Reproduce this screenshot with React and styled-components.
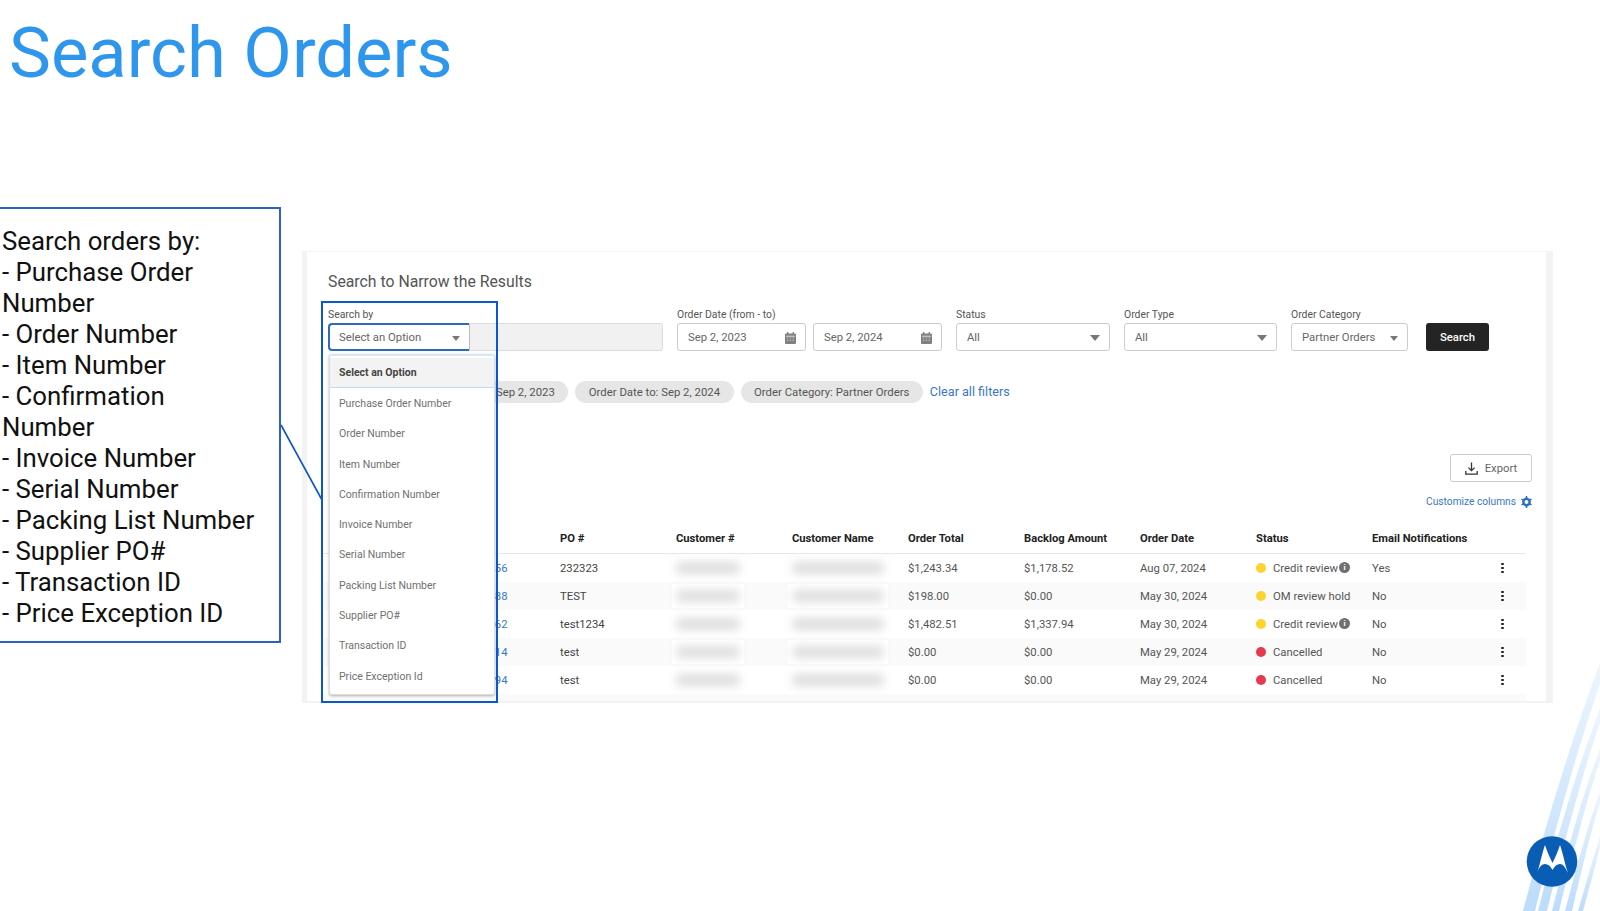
import React from 'react';
import styled, { createGlobalStyle } from 'styled-components';

const GlobalStyle = createGlobalStyle`
  html, body {
    margin: 0;
    padding: 0;
    background: #fff;
    font-family: Roboto, "Liberation Sans", sans-serif;
  }
`;

const Slide = styled.div`
  position: relative;
  width: 1600px;
  height: 911px;
  overflow: hidden;
  background: #fff;
`;

const Title = styled.h1`
  margin: 0;
  padding: 8px 0 0 9px;
  height: 100px;
  box-sizing: border-box;
  font-size: 70.6px;
  line-height: 90px;
  font-weight: 400;
  color: #2f96ee;
`;

const Content = styled.div`
  display: flex;
  align-items: flex-start;
  margin-top: 107px;
  margin-left: -2px;
`;

const Callout = styled.div`
  width: 283px;
  height: 436px;
  box-sizing: border-box;
  border: 2px solid #2a62c8;
  padding: 17px 0 0 2px;
  margin-right: 21px;
  font-size: 25.8px;
  line-height: 31px;
  color: #111;
  flex: none;
`;

const CalloutLine = styled.div``;

const Panel = styled.div`
  position: relative;
  margin-top: 44px;
  width: 1251px;
  height: 452px;
  box-sizing: border-box;
  background: #fff;
  border: solid #f3f3f3;
  border-width: 1px 7px 2px 5px;
  padding: 21px 0 0 21px;
  overflow: hidden;
  flex: none;
`;

const Heading = styled.div`
  font-size: 15.8px;
  line-height: 18px;
  color: #555;
`;

const FilterRow = styled.div`
  display: flex;
  align-items: flex-end;
  margin-top: 18px;
`;

const Field = styled.div`
  display: flex;
  flex-direction: column;
  flex: none;
  margin-left: ${(p) => p.$gap || 0}px;
`;

const Label = styled.div`
  font-size: 10.4px;
  line-height: 12px;
  margin-bottom: 2px;
  color: #555;
`;

const Pair = styled.div`
  display: flex;
  gap: 7px;
`;

const Control = styled.div`
  width: ${(p) => p.$width}px;
  height: 28px;
  box-sizing: border-box;
  display: flex;
  align-items: center;
  justify-content: space-between;
  padding: 0 9px 0 10px;
  font-size: 11.3px;
  color: #666;
  background: #fff;
  border: 1px solid #ccc;
  border-radius: 3px;
`;

const FocusSelect = styled(Control)`
  border: solid #2a6cb8;
  border-width: 2px 0 2px 2px;
  border-radius: 4px 0 0 4px;
  padding: 0 9px 0 9px;
`;

const GreyInput = styled.div`
  width: 194px;
  height: 28px;
  box-sizing: border-box;
  background: #f1f1f1;
  border: 1px solid #ddd;
  border-left-color: #bbb;
  border-radius: 0 3px 3px 0;
`;

const SearchGroup = styled.div`
  display: flex;
`;

const Caret = styled.span`
  width: 0;
  height: 0;
  margin-top: 2px;
  border-left: ${(p) => p.$size || 5}px solid transparent;
  border-right: ${(p) => p.$size || 5}px solid transparent;
  border-top: ${(p) => (p.$size || 5) + 1}px solid #777;
`;

const SearchButton = styled.button`
  width: 63px;
  height: 28px;
  margin-left: 18px;
  flex: none;
  background: #242424;
  color: #fff;
  border: 0;
  border-radius: 3px;
  font-family: inherit;
  font-size: 11.3px;
  font-weight: 500;
`;

const ChipRow = styled.div`
  display: flex;
  align-items: center;
  gap: 7px;
  margin-top: 29.5px;
  margin-left: 68px;
`;

const Chip = styled.span`
  height: 22px;
  padding: 0 13.5px;
  display: flex;
  align-items: center;
  background: #e6e6e6;
  border-radius: 11px;
  font-size: 11.35px;
  color: #555;
  white-space: nowrap;
`;

const ClearLink = styled.a`
  font-size: 12.6px;
  color: #3b78c4;
`;

const ActionColumn = styled.div`
  display: flex;
  flex-direction: column;
  align-items: flex-end;
  gap: 13px;
  margin-top: 51.5px;
  margin-right: 14px;
`;

const ExportButton = styled.div`
  width: 82px;
  height: 28px;
  box-sizing: border-box;
  display: flex;
  align-items: center;
  justify-content: center;
  gap: 7px;
  border: 1px solid #ccc;
  border-radius: 3px;
  font-size: 11.3px;
  color: #666;
`;

const CustomizeLink = styled.div`
  display: flex;
  align-items: center;
  gap: 5px;
  font-size: 10.2px;
  line-height: 14px;
  color: #3b78c4;
`;

const Table = styled.div`
  margin-top: 15px;
  margin-left: -5px;
  width: 1203px;
`;

const HeaderRow = styled.div`
  display: grid;
  grid-template-columns: 121px repeat(9, 116px) 1fr;
  height: 29px;
  align-items: center;
  border-bottom: 1px solid #e8e8e8;
  font-size: 11.2px;
  font-weight: 700;
  color: #222;
`;

const Row = styled.div`
  display: grid;
  grid-template-columns: 121px repeat(8, 116px) 1fr;
  height: 28px;
  align-items: center;
  font-size: 11.3px;
  color: #555;
  background: ${(p) => (p.$alt ? '#fafafa' : '#fff')};
`;

const OrderLink = styled.a`
  color: #3b78c4;
`;

const DarkCell = styled.span`
  color: #444;
`;

const Blurred = styled.div`
  height: 24px;
  width: ${(p) => p.$width}px;
  margin-left: -4px;
  background: #fff;
  display: flex;
  align-items: center;
  padding: 0 5px;
  box-sizing: border-box;
`;

const BlurBar = styled.div`
  height: 12px;
  width: 100%;
  background: #dedede;
  filter: blur(5px);
`;

const StatusCell = styled.div`
  display: flex;
  align-items: center;
`;

const Dot = styled.span`
  width: 10px;
  height: 10px;
  border-radius: 50%;
  margin-right: 7px;
  background: ${(p) => p.$color};
`;

const InfoBadge = styled.span`
  width: 11px;
  height: 11px;
  border-radius: 50%;
  margin-left: 1px;
  margin-bottom: 1px;
  background: #707070;
  color: #fff;
  font-size: 8px;
  font-weight: 700;
  line-height: 11px;
  text-align: center;
`;

const EmailCell = styled.div`
  display: flex;
  align-items: center;
  justify-content: space-between;
  padding-right: 22px;
`;

const Kebab = styled.span`
  display: flex;
  flex-direction: column;
  gap: 1.6px;
  & > i {
    width: 2.6px;
    height: 2.6px;
    border-radius: 50%;
    background: #222;
  }
`;

/* things lying over the screenshot */
const Highlight = styled.div`
  position: absolute;
  left: 321px;
  top: 301px;
  width: 177px;
  height: 402px;
  box-sizing: border-box;
  border: 2px solid #0b57d0;
  pointer-events: none;
  z-index: 3;
`;

const Connector = styled.svg`
  position: absolute;
  left: 280px;
  top: 424px;
  z-index: 3;
`;

const Dropdown = styled.div`
  position: absolute;
  left: 329px;
  top: 354px;
  width: 166px;
  height: 341px;
  box-sizing: border-box;
  padding-top: 2px;
  background: #fff;
  border: 1px solid #ddd;
  border-top: 2px solid #d6e8f8;
  border-radius: 3px;
  box-shadow: 0 1px 3px rgba(0, 0, 0, 0.3);
  z-index: 2;
`;

const Option = styled.div`
  height: 30.3px;
  box-sizing: border-box;
  padding-left: 9px;
  display: flex;
  align-items: center;
  font-size: 10.5px;
  color: ${(p) => (p.$active ? '#444' : '#707070')};
  font-weight: ${(p) => (p.$active ? 700 : 400)};
  background: ${(p) => (p.$active ? '#f3f3f3' : 'transparent')};
  border-bottom: ${(p) => (p.$active ? '1px solid #bcdcf5' : '0')};
`;

const Stripes = styled.svg`
  position: absolute;
  right: 0;
  bottom: 0;
`;

const Logo = styled.svg`
  position: absolute;
  left: 1526px;
  top: 835px;
`;

const searchOptions = [
  'Purchase Order Number',
  'Order Number',
  'Item Number',
  'Confirmation Number',
  'Invoice Number',
  'Serial Number',
  'Packing List Number',
  'Supplier PO#',
  'Transaction ID',
  'Price Exception Id',
];

const calloutLines = [
  'Search orders by:',
  '- Purchase Order',
  'Number',
  '- Order Number',
  '- Item Number',
  '- Confirmation',
  'Number',
  '- Invoice Number',
  '- Serial Number',
  '- Packing List Number',
  '- Supplier PO#',
  '- Transaction ID',
  '- Price Exception ID',
];

const rows = [
  { order: '4000123456', po: '232323', total: '$1,243.34', backlog: '$1,178.52', date: 'Aug 07, 2024', status: 'Credit review', dot: '#fdd32e', info: true, email: 'Yes' },
  { order: '4000123388', po: 'TEST', total: '$198.00', backlog: '$0.00', date: 'May 30, 2024', status: 'OM review hold', dot: '#fdd32e', email: 'No' },
  { order: '4000123362', po: 'test1234', total: '$1,482.51', backlog: '$1,337.94', date: 'May 30, 2024', status: 'Credit review', dot: '#fdd32e', info: true, email: 'No' },
  { order: '4000123314', po: 'test', total: '$0.00', backlog: '$0.00', date: 'May 29, 2024', status: 'Cancelled', dot: '#e63950', email: 'No' },
  { order: '4000123294', po: 'test', total: '$0.00', backlog: '$0.00', date: 'May 29, 2024', status: 'Cancelled', dot: '#e63950', email: 'No' },
];

const CalendarIcon = () => (
  <svg width="11" height="12" viewBox="0 0 11 12" style={{ marginTop: 2 }}>
    <path fill="#808080" d="M2 0h1.4v1.4h4.2V0H9v1.4h1.2c.4 0 .8.4.8.8v9c0 .4-.4.8-.8.8H.8c-.4 0-.8-.4-.8-.8v-9c0-.4.4-.8.8-.8H2z" />
    <path fill="#fff" d="M1 3.8h9v.7H1z" />
    <path fill="#bbb" d="M2 5.400h1.400v1.200H2zM4.800 5.400h1.400v1.200H4.800zM7.600 5.400H9v1.200H7.600zM2 7.800h1.400V9H2zM4.800 7.800h1.400V9H4.800zM7.600 7.800H9V9H7.600z" />
  </svg>
);

const ExportIcon = () => (
  <svg width="13" height="13" viewBox="0 0 13 13">
    <path fill="none" stroke="#333" strokeWidth="1.3" d="M6.500 0.500v8M3.400 5.600l3.100 3.100 3.100-3.100M0.800 9v3.200h11.400V9" />
  </svg>
);

const GearIcon = () => (
  <svg width="11" height="12" viewBox="0 0 22 24">
    <path fill="none" stroke="#2f6fc0" strokeWidth="5" d="M11 5l6 3.500v7L11 19l-6-3.500v-7z" />
    <path fill="none" stroke="#2f6fc0" strokeWidth="3" d="M11 0v4M11 20v4M1 6l3 2M18 16l3 2M1 18l3-2M18 8l3-2" />
  </svg>
);

const App = () => (
  <Slide>
    <GlobalStyle />
    <Stripes width="110" height="260" viewBox="0 0 110 260">
      <defs>
        <linearGradient id="stripeFade" x1="0" y1="1" x2="0" y2="0">
          <stop offset="0" stopColor="#bcdcfb" />
          <stop offset="1" stopColor="#eef6fe" />
        </linearGradient>
      </defs>
      <path fill="url(#stripeFade)" d="M33 260 Q68 125 110 12 V33 Q78 125 45 260z" />
      <path fill="url(#stripeFade)" d="M48 260 Q80 135 110 58 V72 Q88 135 57 260z" />
      <path fill="url(#stripeFade)" d="M62 260 Q88 155 110 98 V110 Q94 155 69 260z" />
      <path fill="url(#stripeFade)" d="M75 260 Q93 190 110 140 V151 Q98 190 82 260z" />
      <path fill="url(#stripeFade)" d="M88 260 Q98 225 110 185 V196 Q102 228 93 260z" />
    </Stripes>
    <Title>Search Orders</Title>
    <Content>
      <Callout>
        {calloutLines.map((line, i) => (
          <CalloutLine key={i}>{line}</CalloutLine>
        ))}
      </Callout>
      <Panel>
        <Heading>Search to Narrow the Results</Heading>
        <FilterRow>
          <Field>
            <Label>Search by</Label>
            <SearchGroup>
              <FocusSelect $width={141}>
                Select an Option
                <Caret $size={4} />
              </FocusSelect>
              <GreyInput />
            </SearchGroup>
          </Field>
          <Field $gap={14}>
            <Label>Order Date (from - to)</Label>
            <Pair>
              <Control $width={129}>
                Sep 2, 2023
                <CalendarIcon />
              </Control>
              <Control $width={129}>
                Sep 2, 2024
                <CalendarIcon />
              </Control>
            </Pair>
          </Field>
          <Field $gap={14}>
            <Label>Status</Label>
            <Control $width={154}>
              All
              <Caret />
            </Control>
          </Field>
          <Field $gap={14}>
            <Label>Order Type</Label>
            <Control $width={153}>
              All
              <Caret />
            </Control>
          </Field>
          <Field $gap={14}>
            <Label>Order Category</Label>
            <Control $width={117}>
              Partner Orders
              <Caret $size={4} />
            </Control>
          </Field>
          <SearchButton>Search</SearchButton>
        </FilterRow>
        <ChipRow>
          <Chip>Order Date from: Sep 2, 2023</Chip>
          <Chip>Order Date to: Sep 2, 2024</Chip>
          <Chip>Order Category: Partner Orders</Chip>
          <ClearLink>Clear all filters</ClearLink>
        </ChipRow>
        <ActionColumn>
          <ExportButton>
            <ExportIcon />
            Export
          </ExportButton>
          <CustomizeLink>
            Customize columns
            <GearIcon />
          </CustomizeLink>
        </ActionColumn>
        <Table>
          <HeaderRow>
            <span />
            <span>Order #</span>
            <span>PO #</span>
            <span>Customer #</span>
            <span>Customer Name</span>
            <span>Order Total</span>
            <span>Backlog Amount</span>
            <span>Order Date</span>
            <span>Status</span>
            <span>Email Notifications</span>
          </HeaderRow>
          {rows.map((row, i) => (
            <Row key={row.order} $alt={i % 2 === 1}>
              <span />
              <OrderLink>{row.order}</OrderLink>
              <DarkCell>{row.po}</DarkCell>
              <Blurred $width={72}><BlurBar /></Blurred>
              <Blurred $width={100}><BlurBar /></Blurred>
              <span>{row.total}</span>
              <span>{row.backlog}</span>
              <span>{row.date}</span>
              <StatusCell>
                <Dot $color={row.dot} />
                {row.status}
                {row.info && <InfoBadge>i</InfoBadge>}
              </StatusCell>
              <EmailCell>
                {row.email}
                <Kebab><i /><i /><i /></Kebab>
              </EmailCell>
            </Row>
          ))}
          <Row $alt />
        </Table>
      </Panel>
    </Content>
    <Connector width="44" height="78" viewBox="0 0 44 78">
      <path d="M1 1 L42 76" stroke="#0b57c0" strokeWidth="1.6" fill="none" />
    </Connector>
    <Dropdown>
      <Option $active>Select an Option</Option>
      {searchOptions.map((option) => (
        <Option key={option}>{option}</Option>
      ))}
    </Dropdown>
    <Highlight />
    <Logo width="52" height="52" viewBox="0 0 52 52">
      <circle cx="26" cy="26.500" r="25.300" fill="#0a5db5" />
      <path fill="#fff" d="M11 38 C14 30 16 18 19 10 C21 16 24 23 26.500 28 C29 23 32 16 34 10 C37 18 39 30 42 38 C39 32 37 29 34 29 C31 29 28.500 31 26.500 35 C24.500 31 22 29 19 29 C16 29 13 32 11 38z" />
    </Logo>
  </Slide>
);

export default App;
